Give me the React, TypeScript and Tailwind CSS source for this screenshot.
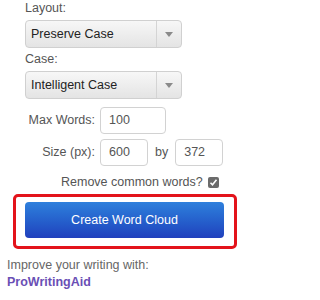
import { useState } from 'react'

function Select({ value }: { value: string }) {
  return (
    <div className="ml-[25px] flex h-[28px] w-[157px] items-stretch rounded-[4px] border border-[#d0d0d0] bg-gradient-to-b from-[#f7f7f7] to-[#e4e4e4] text-[12.5px] text-[#222]">
      <div className="flex flex-1 items-center pl-[5px]">{value}</div>
      <div className="flex w-[25px] items-center justify-center border-l border-[#d4d4d4]">
        <svg width="8" height="5" viewBox="0 0 8 5">
          <path d="M0 0h8L4 5z" fill="#8a8a8a" />
        </svg>
      </div>
    </div>
  )
}

function Field({ value, w }: { value: string; w: string }) {
  return (
    <div className={`flex h-[27px] ${w} items-center rounded-[4px] border border-[#d2d2d2] bg-white pl-[8px] text-[12.5px] text-[#555]`}>
      {value}
    </div>
  )
}

export default function App() {
  const [checked] = useState(true)

  return (
    <div className="h-[300px] w-[247px] overflow-hidden bg-white font-['Liberation_Sans',Arial,sans-serif] text-[12.5px] text-[#555]">
      <div className="ml-[25px] pt-[1px] leading-[15px]">Layout:</div>
      <div className="mt-[4px]">
        <Select value="Preserve Case" />
      </div>
      <div className="ml-[25px] mt-[4px] leading-[15px]">Case:</div>
      <div className="mt-[4px]">
        <Select value="Intelligent Case" />
      </div>

      <div className="mt-[8px] flex items-center">
        <span className="w-[100px] pr-[5px] text-right">Max Words:</span>
        <Field value="100" w="w-[66px]" />
      </div>
      <div className="mt-[5px] flex items-center">
        <span className="w-[100px] pr-[5px] text-right">Size (px):</span>
        <Field value="600" w="w-[48px]" />
        <span className="mx-[7px]">by</span>
        <Field value="372" w="w-[48px]" />
      </div>
      <div className="mt-[9px] flex items-center">
        <span className="ml-[61px] leading-[15px]">Remove common words?</span>
        <span className="ml-[5px] flex h-[11px] w-[11px] items-center justify-center rounded-[2px] bg-[#6b6b6b]">
          {checked && (
            <svg width="9" height="9" viewBox="0 0 9 9">
              <path d="M1.5 4.7l2 2 4-5" stroke="#fff" strokeWidth="1.6" fill="none" />
            </svg>
          )}
        </span>
      </div>

      <div className="ml-[13px] mt-[4px] h-[55px] w-[224px] rounded-[5px] border-[3px] border-[#e3131b] pl-[9px] pt-[5px]">
        <button className="flex h-[36px] w-[199px] items-center justify-center rounded-[4px] bg-gradient-to-b from-[#2f80dc] to-[#2140bd] text-[12.5px] text-white">
          Create Word Cloud
        </button>
      </div>

      <div className="ml-[7px] mt-[9px] leading-[15px] text-[#666]">Improve your writing with:</div>
      <div className="ml-[7px] mt-[2px] font-bold leading-[15px] text-[#6a4fb5]">ProWritingAid</div>
    </div>
  )
}
